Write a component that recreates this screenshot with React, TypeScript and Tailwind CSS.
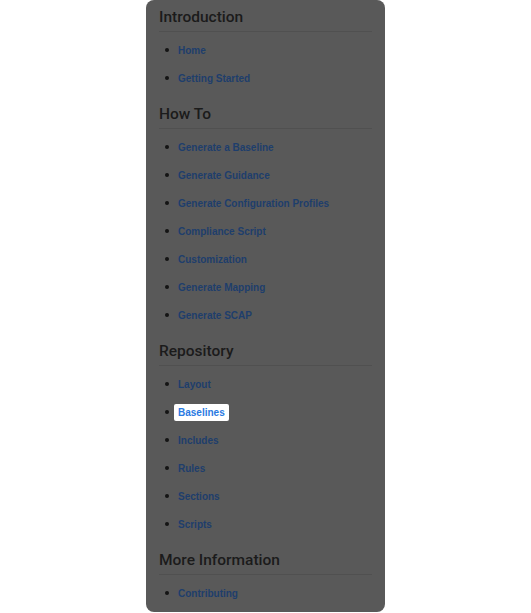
const sections = [
  { title: 'Introduction', items: ['Home', 'Getting Started'] },
  {
    title: 'How To',
    items: [
      'Generate a Baseline',
      'Generate Guidance',
      'Generate Configuration Profiles',
      'Compliance Script',
      'Customization',
      'Generate Mapping',
      'Generate SCAP',
    ],
  },
  { title: 'Repository', items: ['Layout', 'Baselines', 'Includes', 'Rules', 'Sections', 'Scripts'] },
  { title: 'More Information', items: ['Contributing'] },
];

const active = 'Baselines';

export default function App() {
  return (
    <div className="w-[531px] h-[613px] bg-white" style={{ fontFamily: '"Liberation Sans", Arial, sans-serif' }}>
      <nav className="mx-auto w-[239px] h-[612px] overflow-hidden rounded-[8px] bg-[#595959] px-[13px] pt-[7px]">
        {sections.map((section, i) => (
          <div key={section.title} className={i > 0 ? 'mt-[12px]' : ''}>
            <h2 className="border-b border-[#505050] pb-[4px] font-['Roboto',sans-serif] text-[15.5px] font-medium leading-[20px] text-[#1b1b1b]">
              {section.title}
            </h2>
            <ul className="pt-[4px]">
              {section.items.map(item => (
                <li key={item} className="flex h-[28px] items-center pl-[6px]">
                  <span className="h-[4px] w-[4px] rounded-full bg-[#141414]" />
                  <span
                    className={
                      item === active
                        ? 'ml-[5px] rounded-[2px] bg-white px-[4px] py-[2px] text-[10px] font-bold leading-[13px] text-[#2a7ae2]'
                        : 'ml-[5px] px-[4px] py-[2px] text-[10px] font-bold leading-[13px] text-[#1e3e6c]'
                    }
                  >
                    {item}
                  </span>
                </li>
              ))}
            </ul>
          </div>
        ))}
      </nav>
    </div>
  );
}
